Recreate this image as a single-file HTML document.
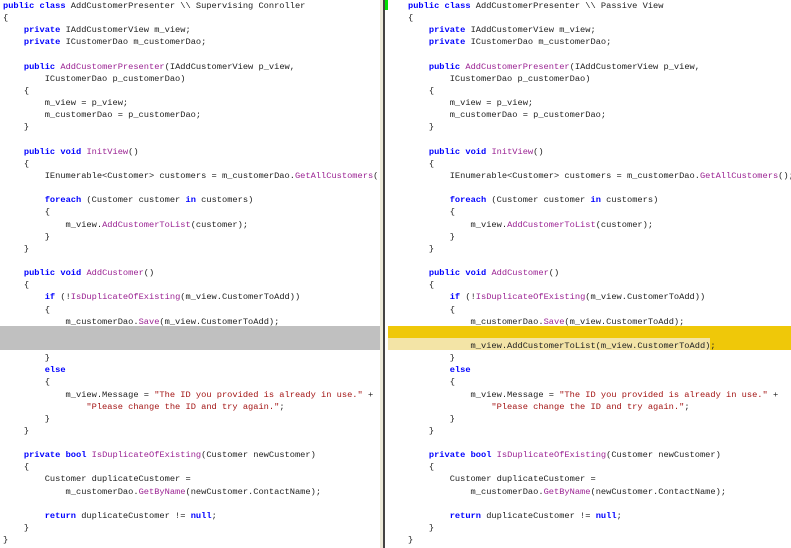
<!DOCTYPE html>
<html><head><meta charset="utf-8"><style>
body{margin:0;width:791px;height:548px;background:#fff;position:relative;overflow:hidden}
.p{position:absolute;top:0px;font-family:"Liberation Mono",monospace;font-size:8.7px;line-height:12.14px;color:#222;white-space:pre;overflow:hidden}
.k{color:#0000ff;font-weight:bold}
.m{color:#9b2393}
.s{color:#a31515}
.g{position:absolute;left:0;width:380px;top:326px;height:24px;background:#c0c0c0}
.y{position:absolute;left:388px;right:0;top:326px;height:24px;background:#efc809}
.yl{background:#f3e4a6}
</style></head><body>
<div class="g"></div>
<div class="y"></div>
<div style="position:absolute;left:380px;top:0;width:3px;height:548px;background:#ece9d8"></div>
<div style="position:absolute;left:383px;top:0;width:2px;height:548px;background:#444"></div>
<div style="position:absolute;left:385px;top:0;width:3px;height:10px;background:#00e000"></div>
<div class="p" style="left:3px;width:377px;height:548px"><span class="k">public class</span> AddCustomerPresenter \\ Supervising Conroller
{
    <span class="k">private</span> IAddCustomerView m_view;
    <span class="k">private</span> ICustomerDao m_customerDao;

    <span class="k">public</span> <span class="m">AddCustomerPresenter</span>(IAddCustomerView p_view,
        ICustomerDao p_customerDao)
    {
        m_view = p_view;
        m_customerDao = p_customerDao;
    }

    <span class="k">public void</span> <span class="m">InitView</span>()
    {
        IEnumerable&lt;Customer&gt; customers = m_customerDao.<span class="m">GetAllCustomers</span>();

        <span class="k">foreach</span> (Customer customer <span class="k">in</span> customers)
        {
            m_view.<span class="m">AddCustomerToList</span>(customer);
        }
    }

    <span class="k">public void</span> <span class="m">AddCustomer</span>()
    {
        <span class="k">if</span> (!<span class="m">IsDuplicateOfExisting</span>(m_view.CustomerToAdd))
        {
            m_customerDao.<span class="m">Save</span>(m_view.CustomerToAdd);


        }
        <span class="k">else</span>
        {
            m_view.Message = <span class="s">"The ID you provided is already in use."</span> +
                <span class="s">"Please change the ID and try again."</span>;
        }
    }

    <span class="k">private bool</span> <span class="m">IsDuplicateOfExisting</span>(Customer newCustomer)
    {
        Customer duplicateCustomer =
            m_customerDao.<span class="m">GetByName</span>(newCustomer.ContactName);

        <span class="k">return</span> duplicateCustomer != <span class="k">null</span>;
    }
}</div>
<div class="yl" style="position:absolute;left:388px;top:338px;width:322px;height:12px"></div>
<div class="p" style="left:408px"><span class="k">public class</span> AddCustomerPresenter \\ Passive View
{
    <span class="k">private</span> IAddCustomerView m_view;
    <span class="k">private</span> ICustomerDao m_customerDao;

    <span class="k">public</span> <span class="m">AddCustomerPresenter</span>(IAddCustomerView p_view,
        ICustomerDao p_customerDao)
    {
        m_view = p_view;
        m_customerDao = p_customerDao;
    }

    <span class="k">public void</span> <span class="m">InitView</span>()
    {
        IEnumerable&lt;Customer&gt; customers = m_customerDao.<span class="m">GetAllCustomers</span>();

        <span class="k">foreach</span> (Customer customer <span class="k">in</span> customers)
        {
            m_view.<span class="m">AddCustomerToList</span>(customer);
        }
    }

    <span class="k">public void</span> <span class="m">AddCustomer</span>()
    {
        <span class="k">if</span> (!<span class="m">IsDuplicateOfExisting</span>(m_view.CustomerToAdd))
        {
            m_customerDao.<span class="m">Save</span>(m_view.CustomerToAdd);

            m_view.AddCustomerToList(m_view.CustomerToAdd);
        }
        <span class="k">else</span>
        {
            m_view.Message = <span class="s">"The ID you provided is already in use."</span> +
                <span class="s">"Please change the ID and try again."</span>;
        }
    }

    <span class="k">private bool</span> <span class="m">IsDuplicateOfExisting</span>(Customer newCustomer)
    {
        Customer duplicateCustomer =
            m_customerDao.<span class="m">GetByName</span>(newCustomer.ContactName);

        <span class="k">return</span> duplicateCustomer != <span class="k">null</span>;
    }
}</div>
</body></html>
